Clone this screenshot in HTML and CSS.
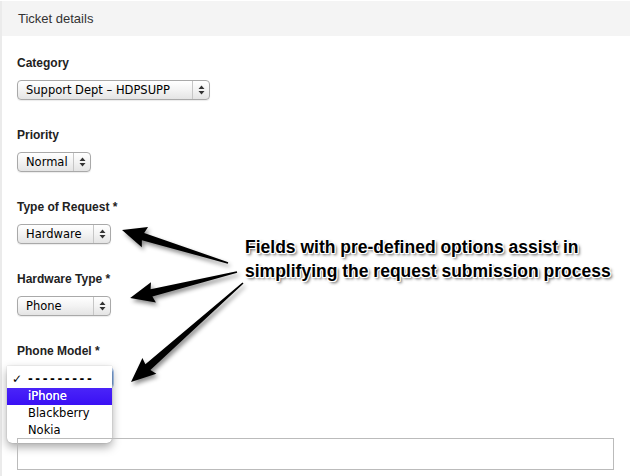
FILE: index.html
```html
<!DOCTYPE html>
<html>
<head>
<meta charset="utf-8">
<link rel="stylesheet" href="styles.css">
</head>
<body>
<div class="panel">
  <div class="panel-header">Ticket details</div>
  <div class="panel-body">
    <div class="field">
      <div class="label">Category</div>
      <div class="select w-cat"><span class="select-text">Support Dept – HDPSUPP</span><span class="select-arrows"><svg width="7" height="10" viewBox="0 0 7 10"><path d="M3.5 0.5 L6.5 4 L0.5 4 Z M3.5 9.5 L6.5 6 L0.5 6 Z" fill="#333"/></svg></span></div>
    </div>
    <div class="field">
      <div class="label">Priority</div>
      <div class="select w-pri"><span class="select-text">Normal</span><span class="select-arrows"><svg width="7" height="10" viewBox="0 0 7 10"><path d="M3.5 0.5 L6.5 4 L0.5 4 Z M3.5 9.5 L6.5 6 L0.5 6 Z" fill="#333"/></svg></span></div>
    </div>
    <div class="field">
      <div class="label">Type of Request *</div>
      <div class="select w-mid"><span class="select-text">Hardware</span><span class="select-arrows"><svg width="7" height="10" viewBox="0 0 7 10"><path d="M3.5 0.5 L6.5 4 L0.5 4 Z M3.5 9.5 L6.5 6 L0.5 6 Z" fill="#333"/></svg></span></div>
    </div>
    <div class="field">
      <div class="label">Hardware Type *</div>
      <div class="select w-mid"><span class="select-text">Phone</span><span class="select-arrows"><svg width="7" height="10" viewBox="0 0 7 10"><path d="M3.5 0.5 L6.5 4 L0.5 4 Z M3.5 9.5 L6.5 6 L0.5 6 Z" fill="#333"/></svg></span></div>
    </div>
    <div class="field field-open">
      <div class="label">Phone Model *</div>
      <div class="select w-model focus"><span class="select-text"></span><span class="select-arrows"><svg width="7" height="10" viewBox="0 0 7 10"><path d="M3.5 0.5 L6.5 4 L0.5 4 Z M3.5 9.5 L6.5 6 L0.5 6 Z" fill="#333"/></svg></span></div>
      <div class="menu">
        <div class="menu-item"><span class="check">✓</span><span class="dashes">---------</span></div>
        <div class="menu-item selected">iPhone</div>
        <div class="menu-item">Blackberry</div>
        <div class="menu-item">Nokia</div>
      </div>
    </div>
    <div class="field last">
      <div class="label-spacer"></div>
      <div class="textarea"></div>
    </div>
  </div>

  <svg class="arrows" width="630" height="476" viewBox="0 0 630 476">
    <defs>
      <filter id="sh" x="-20%" y="-20%" width="140%" height="140%">
        <feDropShadow dx="2" dy="3" stdDeviation="2" flood-color="#000" flood-opacity="0.45"/>
      </filter>
    </defs>
    <g filter="url(#sh)" fill="#000">
      <polygon transform="translate(228,263) rotate(197.3)" points="0,-0.8 89,-3.8 87,-10.5 111,0 87,10.5 89,3.8 0,0.8"/>
      <polygon transform="translate(237,272) rotate(166.3)" points="0,-0.8 88,-3.8 86,-10.5 110,0 86,10.5 88,3.8 0,0.8"/>
      <polygon transform="translate(243,283) rotate(138.5)" points="0,-0.8 127,-3.8 125,-10.5 149.5,0 125,10.5 127,3.8 0,0.8"/>
    </g>
  </svg>
  <div class="note">Fields with pre-defined options assist in<br>simplifying the request submission process</div>
</div>
</body>
</html>
```

FILE: styles.css
```css
html, body {
  margin: 0;
  padding: 0;
  background: #fff;
}
body {
  width: 630px;
  height: 476px;
  overflow: hidden;
  position: relative;
}
.panel {
  margin-top: 1px;
  border-left: 2px solid #ebebeb;
  height: 475px;
  box-sizing: border-box;
}
.panel-header {
  background: #f4f4f4;
  height: 35px;
  line-height: 35px;
  padding-left: 16px;
  font-family: "Liberation Sans", Arial, sans-serif;
  font-size: 13px;
  color: #333;
}
.panel-body {
  padding: 20px 0 0 15px;
}
.field {
  margin-bottom: 28px;
  position: relative;
}
.field.last {
  margin-bottom: 0;
}
.label {
  font-family: "Liberation Sans", Arial, sans-serif;
  font-weight: bold;
  font-size: 12px;
  line-height: 14px;
  color: #222;
  margin-bottom: 10px;
}
.label-spacer {
  height: 14px;
  margin-bottom: 8px;
}
.select {
  display: flex;
  height: 20px;
  box-sizing: border-box;
  border: 1px solid #a9a9a9;
  border-radius: 4px;
  background: linear-gradient(#ffffff, #f3f3f3 50%, #e4e4e4);
  box-shadow: 0 1px 1px rgba(0, 0, 0, 0.08);
}
.select-text {
  flex: 1;
  padding-left: 8px;
  font-family: "DejaVu Sans", Verdana, sans-serif;
  font-size: 11.5px;
  line-height: 18px;
  color: #000;
  white-space: nowrap;
  overflow: hidden;
}
.select-arrows {
  width: 16px;
  border-left: 1px solid #c6c6c6;
  display: flex;
  align-items: center;
  justify-content: center;
}
.w-cat { width: 193px; }
.w-pri { width: 74px; }
.w-mid { width: 94px; }
.w-model { width: 96px; }
.select.focus {
  border-color: #7ea6de;
  box-shadow: 0 0 0 1px rgba(120, 165, 230, 0.6);
}
.menu {
  position: absolute;
  left: -10px;
  top: 22px;
  width: 105px;
  box-sizing: border-box;
  padding: 5px 0 4px;
  background: #fff;
  border-radius: 0 0 5px 5px;
  box-shadow: 0 4px 10px rgba(0, 0, 0, 0.35), 0 0 1px rgba(0, 0, 0, 0.4);
}
.menu-item {
  position: relative;
  height: 17px;
  line-height: 17px;
  padding-left: 21px;
  font-family: "DejaVu Sans", Verdana, sans-serif;
  font-size: 11.5px;
  color: #000;
}
.menu-item.selected {
  background: linear-gradient(#4a24f8, #3a10f4);
  color: #fff;
  text-shadow: 0 0 0.5px #fff;
}
.check {
  position: absolute;
  left: 5px;
  top: 0;
  font-size: 12px;
}
.dashes {
  letter-spacing: 2.6px;
  font-weight: bold;
}
.textarea {
  width: 597px;
  height: 32px;
  box-sizing: border-box;
  border: 1px solid #bbb;
}
.arrows {
  position: absolute;
  left: 0;
  top: 0;
  pointer-events: none;
}
.note {
  position: absolute;
  left: 245px;
  top: 235px;
  font-family: "Liberation Sans", Arial, sans-serif;
  font-weight: bold;
  font-size: 17.5px;
  line-height: 24px;
  color: #000;
  white-space: nowrap;
  text-shadow: -1px -1px 0 #fff, 1px -1px 0 #fff, -1px 1px 0 #fff, 1px 1px 0 #fff,
    0 -1px 0 #fff, 0 1px 0 #fff, -1px 0 0 #fff, 1px 0 0 #fff,
    2px 2px 3px rgba(0, 0, 0, 0.7);
}
```
